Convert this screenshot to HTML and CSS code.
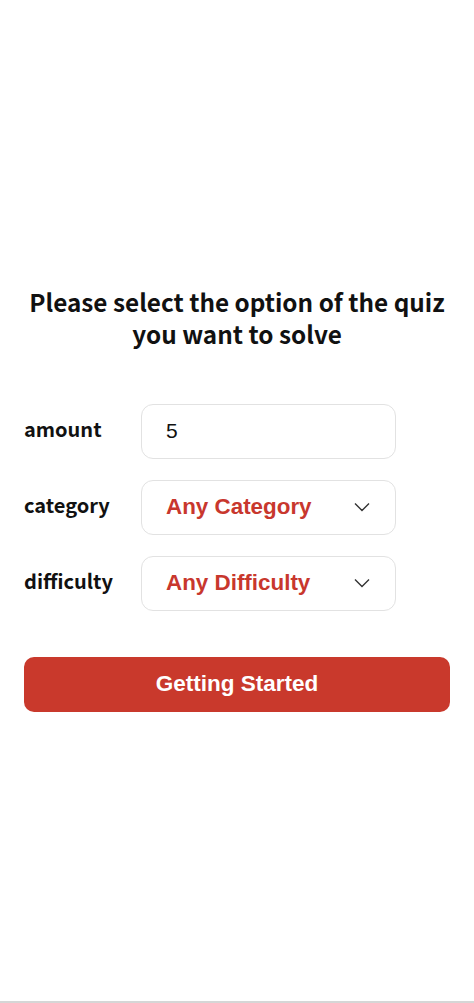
FILE: index.html
```html
<!DOCTYPE html>
<html>
<head>
<meta charset="utf-8">
<link rel="stylesheet" href="styles.css">
</head>
<body>
<div class="page">
  <main class="quiz">
    <h1 class="title">Please select the option of the quiz you want to solve</h1>
    <form class="form">
      <div class="row">
        <label class="label">amount</label>
        <div class="field"><span class="value">5</span></div>
      </div>
      <div class="row">
        <label class="label">category</label>
        <div class="field select"><span class="option">Any Category</span>
          <svg class="chev" width="16" height="10" viewBox="0 0 16 10"><path d="M1 1.5 L8 8.5 L15 1.5" fill="none" stroke="#333" stroke-width="1.4"/></svg>
        </div>
      </div>
      <div class="row">
        <label class="label">difficulty</label>
        <div class="field select"><span class="option">Any Difficulty</span>
          <svg class="chev" width="16" height="10" viewBox="0 0 16 10"><path d="M1 1.5 L8 8.5 L15 1.5" fill="none" stroke="#333" stroke-width="1.4"/></svg>
        </div>
      </div>
    </form>
    <button class="start" type="button">Getting Started</button>
  </main>
</div>
</body>
</html>
```
FILE: styles.css
```css
html, body { margin: 0; padding: 0; background: #fff; }
.page {
  height: 1001px;
  border-bottom: 2px solid #d6d6d6;
  display: flex;
  flex-direction: column;
  justify-content: center;
  padding: 0 24px;
}
.quiz { display: flex; flex-direction: column; margin-bottom: 4px; }
.title {
  font-family: "Noto Sans CJK KR", "Noto Sans", sans-serif;
  font-weight: 700;
  font-size: 24.3px;
  line-height: 32px;
  text-align: center;
  color: #111;
  margin: 0 0 54px;
}
.form { display: flex; flex-direction: column; gap: 21px; }
.row { display: flex; align-items: center; }
.label {
  width: 117px;
  padding-bottom: 5px;
  font-family: "Noto Sans CJK KR", "Noto Sans", sans-serif;
  font-weight: 700;
  font-size: 20px;
  color: #111;
}
.field {
  width: 255px;
  height: 55px;
  box-sizing: border-box;
  border: 1px solid #e2e2e2;
  border-radius: 12px;
  display: flex;
  align-items: center;
  padding: 0 24px;
}
.value { font-family: "Liberation Sans", Arial, sans-serif; font-size: 21px; color: #111; }
.select { justify-content: space-between; padding-right: 25px; }
.option { font-family: "Liberation Sans", Arial, sans-serif; font-weight: 700; font-size: 22.4px; color: #c8372d; }
.start {
  margin-top: 46px;
  height: 55px;
  border: none;
  border-radius: 10px;
  background: #c9392c;
  color: #fff;
  font-family: "Liberation Sans", Arial, sans-serif;
  font-weight: 700;
  font-size: 22.5px;
}
```
